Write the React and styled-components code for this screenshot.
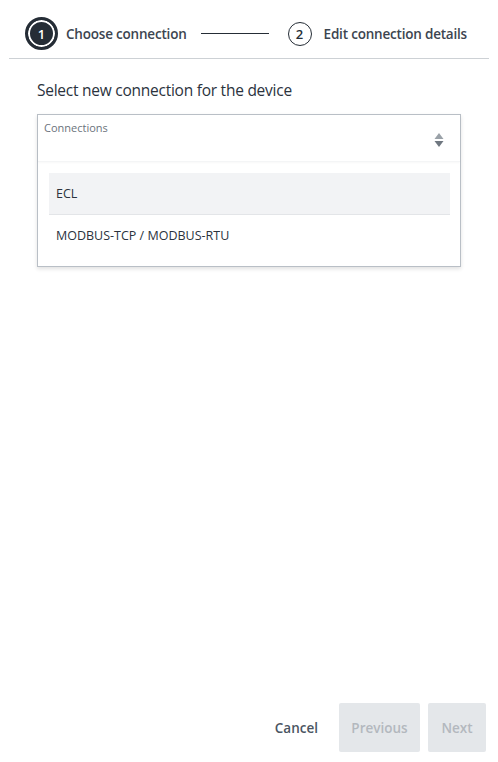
import React from "react";
import styled, { createGlobalStyle } from "styled-components";

const Global = createGlobalStyle`
  html, body { margin: 0; padding: 0; background: #fff; }
  body { font-family: "Open Sans", "Noto Sans", sans-serif; }
  * { box-sizing: border-box; }
`;

const Page = styled.div`
  width: 498px;
  height: 762px;
  display: flex;
  flex-direction: column;
`;

const Stepper = styled.div`
  display: flex;
  align-items: center;
  height: 59px;
  margin: 0 9px;
  padding: 9px 16px 0 16px;
  border-bottom: 1px solid #cdd1d5;
`;

const Step = styled.div`
  display: flex;
  align-items: center;
  gap: ${(p) => (p.$active ? "8px" : "12px")};
`;

const Circle = styled.div`
  display: flex;
  align-items: center;
  justify-content: center;
  border-radius: 50%;
  font-size: 13px;
  font-weight: 600;
  ${(p) =>
    p.$active
      ? `
    width: 33px; height: 33px;
    background: #252d36;
    color: #fff;
    border: 3px solid #252d36;
    box-shadow: inset 0 0 0 2px #fff;
  `
      : `
    width: 24px; height: 24px;
    background: #fff;
    color: #252d36;
    border: 1px solid #252d36;
  `}
`;

const StepLabel = styled.span`
  font-size: 13.5px;
  font-weight: 600;
  color: #3c4550;
  letter-spacing: -0.2px;
`;

const Connector = styled.div`
  width: 68px;
  height: 1px;
  background: #252d36;
  margin: 0 19px 0 14px;
`;

const Body = styled.div`
  flex: 1;
  padding: 20px 37px 0 37px;
`;

const Heading = styled.h2`
  margin: 0 0 13px 0;
  font-size: 15.5px;
  font-weight: 400;
  color: #2b333d;
  letter-spacing: -0.25px;
`;

const SelectBox = styled.div`
  width: 424px;
  border: 1px solid #b9bfc6;
  box-shadow: 0 2px 4px rgba(0, 0, 0, 0.12);
  background: #fff;
`;

const SelectHeader = styled.div`
  height: 47px;
  position: relative;
  padding: 5px 6px;
  box-shadow: 0 1px 2px rgba(0, 0, 0, 0.03);
  border-bottom: 1px solid #f4f5f6;
`;

const FieldLabel = styled.div`
  font-size: 11px;
  color: #6b737c;
`;

const Arrows = styled.svg`
  position: absolute;
  right: 16px;
  top: 17px;
`;

const List = styled.div`
  padding: 11px 10px 10px 11px;
  display: flex;
  flex-direction: column;
`;

const Option = styled.div`
  height: ${(p) => (p.$selected ? "42px" : "41px")};
  display: flex;
  align-items: center;
  padding-left: 7px;
  font-size: 12.5px;
  color: #2b333d;
  font-weight: ${(p) => (p.$selected ? 500 : 400)};
  background: ${(p) => (p.$selected ? "#f2f3f5" : "#fff")};
  border-bottom: ${(p) => (p.$selected ? "1px solid #e3e5e8" : "none")};
`;

const Footer = styled.div`
  display: flex;
  align-items: center;
  justify-content: flex-end;
  gap: 8px;
  padding: 0 12px 10px 0;
`;

const TextButton = styled.button`
  border: none;
  background: none;
  font-family: inherit;
  font-size: 13.5px;
  font-weight: 600;
  color: #4a5562;
  padding: 0 13px;
  height: 49px;
`;

const Button = styled.button`
  border: none;
  border-radius: 2px;
  background: #e4e7ea;
  color: #b3b8be;
  font-family: inherit;
  font-size: 13.5px;
  font-weight: 600;
  height: 49px;
  width: ${(p) => p.$w}px;
`;

export default function App() {
  return (
    <>
      <Global />
      <Page>
        <Stepper>
          <Step $active>
            <Circle $active>1</Circle>
            <StepLabel>Choose connection</StepLabel>
          </Step>
          <Connector />
          <Step>
            <Circle>2</Circle>
            <StepLabel>Edit connection details</StepLabel>
          </Step>
        </Stepper>
        <Body>
          <Heading>Select new connection for the device</Heading>
          <SelectBox>
            <SelectHeader>
              <FieldLabel>Connections</FieldLabel>
              <Arrows width="10" height="16" viewBox="0 0 10 16">
                <path d="M5 1 L9.5 7 L0.5 7 Z" fill="#9aa1a8" />
                <path d="M5 15 L9.5 9 L0.5 9 Z" fill="#6f7780" />
              </Arrows>
            </SelectHeader>
            <List>
              <Option $selected>ECL</Option>
              <Option>MODBUS-TCP / MODBUS-RTU</Option>
            </List>
          </SelectBox>
        </Body>
        <Footer>
          <TextButton>Cancel</TextButton>
          <Button $w={81}>Previous</Button>
          <Button $w={58}>Next</Button>
        </Footer>
      </Page>
    </>
  );
}
